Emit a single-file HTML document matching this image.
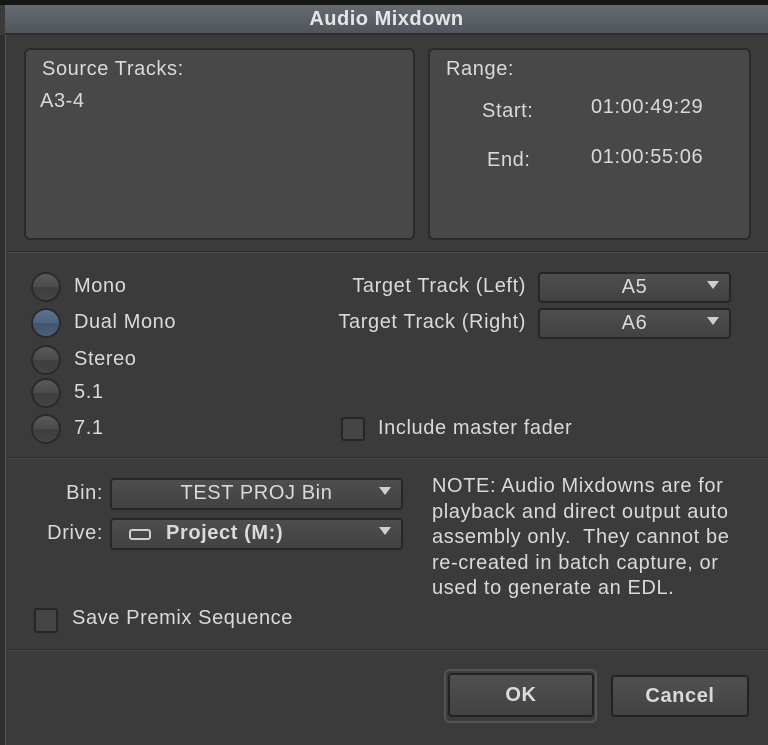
<!DOCTYPE html>
<html><head><style>
*{margin:0;padding:0;box-sizing:border-box}
body{width:768px;height:745px;background:#3b3b3b;font-family:"Liberation Sans",Arial,sans-serif;color:#dadada;font-size:20px;letter-spacing:0.6px;position:relative;overflow:hidden}
.a{position:absolute;white-space:nowrap}
.top{left:0;top:0;width:768px;height:5px;background:#151515}
.title{left:5px;top:5px;width:763px;height:30px;background:linear-gradient(#666b72,#50555c);border-bottom:2px solid #2a2d31;text-align:center;font-weight:bold;font-size:20px;letter-spacing:0.5px;line-height:28px;color:#e6e6e6}
.lside{left:0;top:35px;width:6px;height:710px;background:#2e2e2e;border-right:1px solid #555}
.panel{background:#484848;border:2px solid #2a2a2a;border-radius:6px}
.sep{left:7px;width:761px;height:2px;background:#2c2c2c;border-bottom:1px solid #4a4a4a}
.radio{width:30px;height:30px;border-radius:50%;background:linear-gradient(#5a5a5a 0%,#4a4a4a 50%,#3e3e3e 52%,#444 100%);border:2px solid #2a2a2a}
.radio.on{background:linear-gradient(#5d7390 0%,#4b6280 50%,#3f5470 52%,#4a5f7a 100%)}
.dd{background:linear-gradient(#4e4e4e,#424242);border:2px solid #262626;border-radius:4px;text-align:center;line-height:27px}
.dd:after{content:"";position:absolute;right:10px;top:7px;border-left:6px solid transparent;border-right:6px solid transparent;border-top:8px solid #cfcfcf}
.cb{width:24px;height:24px;background:#454545;border:2px solid #262626;border-radius:3px}
.btn{background:linear-gradient(#505050,#424242);border:2px solid #222;border-radius:4px;text-align:center;font-weight:bold;font-size:20px;line-height:36px}
</style></head><body>
<div class="a top"></div>
<div class="a title">Audio Mixdown</div>
<div class="a lside"></div>

<div class="a panel" style="left:24px;top:48px;width:391px;height:192px"></div>
<div class="a" style="left:42px;top:58px">Source Tracks:</div>
<div class="a" style="left:40px;top:90px">A3-4</div>
<div class="a panel" style="left:428px;top:48px;width:323px;height:192px"></div>
<div class="a" style="left:446px;top:58px">Range:</div>
<div class="a" style="left:482px;top:100px">Start:</div>
<div class="a" style="left:591px;top:96px">01:00:49:29</div>
<div class="a" style="left:487px;top:149px">End:</div>
<div class="a" style="left:591px;top:146px">01:00:55:06</div>

<div class="a sep" style="top:251px"></div>

<div class="a radio" style="left:31px;top:272px"></div><div class="a" style="left:74px;top:275px">Mono</div>
<div class="a radio on" style="left:31px;top:308px"></div><div class="a" style="left:74px;top:311px">Dual Mono</div>
<div class="a radio" style="left:31px;top:345px"></div><div class="a" style="left:74px;top:348px">Stereo</div>
<div class="a radio" style="left:31px;top:378px"></div><div class="a" style="left:74px;top:381px">5.1</div>
<div class="a radio" style="left:31px;top:414px"></div><div class="a" style="left:74px;top:417px">7.1</div>

<div class="a" style="right:242px;top:275px">Target Track (Left)</div>
<div class="a dd" style="left:538px;top:272px;width:193px;height:31px">A5</div>
<div class="a" style="right:242px;top:311px">Target Track (Right)</div>
<div class="a dd" style="left:538px;top:308px;width:193px;height:31px">A6</div>
<div class="a cb" style="left:341px;top:417px"></div>
<div class="a" style="left:378px;top:417px">Include master fader</div>

<div class="a sep" style="top:457px"></div>

<div class="a" style="right:665px;top:482px">Bin:</div>
<div class="a dd" style="left:110px;top:478px;width:293px;height:32px">TEST PROJ Bin</div>
<div class="a" style="right:665px;top:522px">Drive:</div>
<div class="a dd" style="left:110px;top:518px;width:293px;height:32px;text-align:left;padding-left:54px;font-weight:bold">Project (M:)</div>
<div class="a" style="left:129px;top:529px;width:22px;height:11px;border:2px solid #cfcfcf;border-radius:3px"></div>
<div class="a" style="left:432px;top:474px;line-height:25.5px">NOTE: Audio Mixdowns are for<br>playback and direct output auto<br>assembly only.&nbsp; They cannot be<br>re-created in batch capture, or<br>used to generate an EDL.</div>
<div class="a cb" style="left:34px;top:608px;height:25px"></div>
<div class="a" style="left:72px;top:607px">Save Premix Sequence</div>

<div class="a sep" style="top:649px"></div>

<div class="a" style="left:444px;top:669px;width:153px;height:54px;border:2px solid #555;border-radius:6px"></div>
<div class="a btn" style="left:448px;top:673px;width:146px;height:44px;line-height:40px">OK</div>
<div class="a btn" style="left:611px;top:675px;width:138px;height:42px;line-height:38px">Cancel</div>
</body></html>
